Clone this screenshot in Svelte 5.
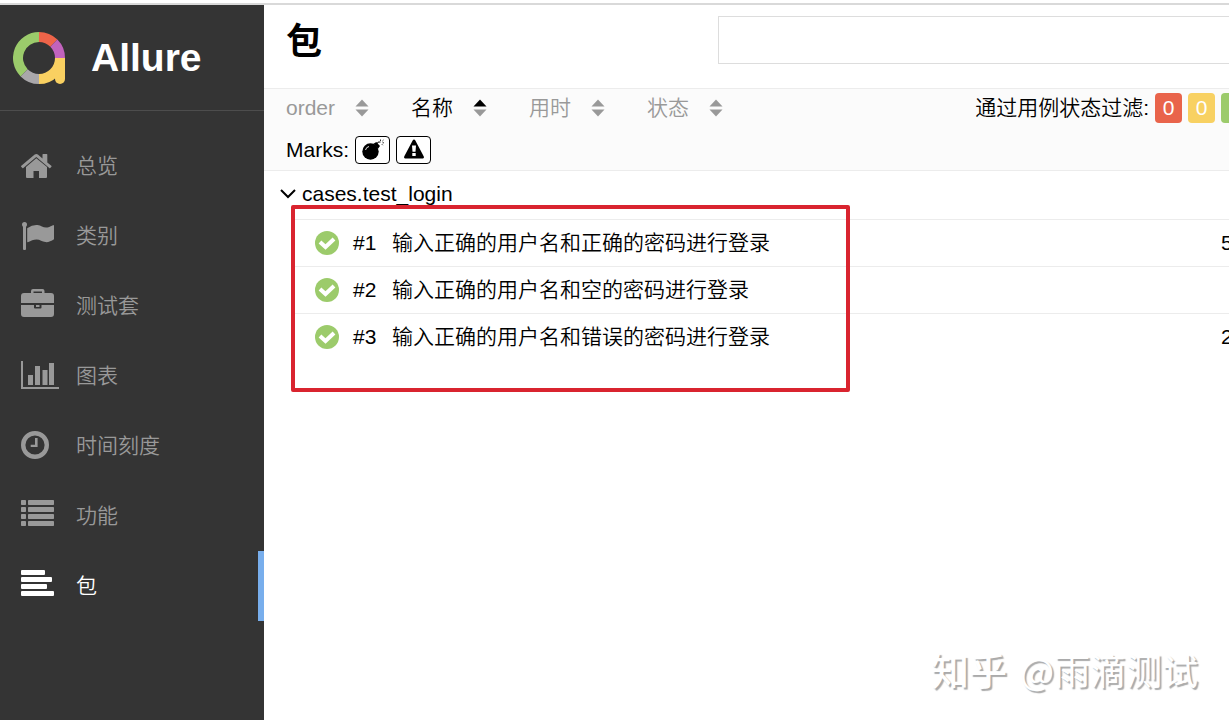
<script lang="ts">
	const navItems = [
		{ id: "overview", label: "总览" },
		{ id: "categories", label: "类别" },
		{ id: "suites", label: "测试套" },
		{ id: "graph", label: "图表" },
		{ id: "timeline", label: "时间刻度" },
		{ id: "behaviors", label: "功能" },
		{ id: "packages", label: "包" }
	];

	const sorters = ["order", "名称", "用时", "状态"];

	const statuses = [
		{ name: "failed", count: 0 },
		{ name: "broken", count: 0 },
		{ name: "passed", count: 3 }
	];

	const cases = [
		{ order: 1, name: "输入正确的用户名和正确的密码进行登录", duration: "5s" },
		{ order: 2, name: "输入正确的用户名和空的密码进行登录", duration: "" },
		{ order: 3, name: "输入正确的用户名和错误的密码进行登录", duration: "2s" }
	];

	let active = $state("packages");
	let sortBy = $state("名称");
	let expanded = $state(true);
	let query = $state("");
</script>

<div class="app">
	<aside class="side-nav">
		<a class="brand" href="#overview">
			<svg class="logo" viewBox="0 0 52 52" fill="none" stroke-width="10">
				<path d="M26 5A21 21 0 0 1 40.85 11.15" stroke="#ee6449" />
				<path d="M40.85 11.15A21 21 0 0 1 47 26" stroke="#c163bd" />
				<path d="M11.15 40.85A21 21 0 0 1 26 5" stroke="#9bcb6b" />
				<path d="M26 47A21 21 0 0 1 11.15 40.85" stroke="#a9a7aa" />
				<path d="M47 26A21 21 0 0 1 26 47" stroke="#f9d061" />
				<path d="M42 26H52V47A5 5 0 0 1 42 47Z" fill="#f9d061" stroke="none" />
			</svg>
			<span>Allure</span>
		</a>

		<nav>
			{#each navItems as item}
				<a href="#{item.id}" class="nav-item" class:active={active === item.id} onclick={() => (active = item.id)}>
					<svg class="nav-icon" viewBox="0 0 38 38" fill="currentColor">
						{#if item.id === "overview"}
							<path d="M15.3 11.2 26 20V30q0 1-1 1H18V24H12.500V31H6q-1 0-1-1V20Z" />
							<path d="M.3 18.800 13.700 7.500q1.600-1.200 3.200 0L21.500 11.400V7.600q0-.6.6-.6h3.600q.6 0 .6.600V15.400l4 3.400q.5.400.1.900l-1.200 1.300q-.4.400-.9 0L15.300 9.900 2.300 21q-.5.400-.9 0L.2 19.700q-.4-.5.1-.9Z" />
						{:else if item.id === "categories"}
							<circle cx="3.500" cy="7.500" r="2.500" />
							<path d="M2 8H5V32q0 1-1 1H3q-1 0-1-1Z" />
							<path d="M6.200 11.300q5.300-3.800 10.300-3.300c4 .4 6 3.200 10 2.400 2.500-.5 4.200-1.700 5.400-2.200q1.100-.4 1.100.8V22.300c-3 1.800-5.500 3.100-8.600 2.800-3.300-.4-5.300-2.700-8.800-2.700-3.200 0-5.900 1.300-8.300 2.700q-1.100.6-1.100-.6Z" />
						{:else if item.id === "suites"}
							<path d="M10 6V4q0-2 2-2H21.500q2 0 2 2V6H30q3 0 3 3V16H0V9Q0 6 3 6ZM12.500 6H21V4.500H12.500Z" fill-rule="evenodd" />
							<path d="M0 18H13V20.500q0 1 1 1H19.500q1 0 1-1V18H33V27q0 3-3 3H3q-3 0-3-3Z" />
							<path d="M15 18H18.500V20H15Z" />
						{:else if item.id === "graph"}
							<path d="M0 4H2V30H38V32H0Z" />
							<path d="M7 18h5v10H7ZM14 9h5v19H14ZM21.500 13h5v15H21.500ZM28 6h5v22H28Z" />
						{:else if item.id === "timeline"}
							<circle cx="14" cy="18" r="11.800" fill="none" stroke="currentColor" stroke-width="4.400" />
							<path d="M14 11H16.600V20H9.700V17.700H14Z" />
						{:else if item.id === "behaviors"}
							{#each [3, 10, 17, 24] as y}
								<rect x="0" {y} width="5" height="5" rx=".7" />
								<rect x="7" {y} width="26" height="5" rx=".7" />
							{/each}
						{:else}
							<rect x="0" y="3" width="24" height="5" rx="1" />
							<rect x="0" y="10" width="31" height="5" rx="1" />
							<rect x="0" y="17" width="26" height="5" rx="1" />
							<rect x="0" y="24" width="33" height="5" rx="1" />
						{/if}
					</svg>
					<span>{item.label}</span>
				</a>
			{/each}
		</nav>
	</aside>

	<main>
		<div class="report">
			<header class="title-bar">
				<h1>包</h1>
				<input class="search" type="search" aria-label="Search" bind:value={query} />
			</header>

			<section class="controls">
				<div class="control-row">
					{#each sorters as sorter}
						<button class="sorter" class:selected={sortBy === sorter} onclick={() => (sortBy = sorter)}>
							<span>{sorter}</span>
							<svg class="sort-icon" viewBox="0 0 14 18">
								<path class="asc" d="M7 .5 13.500 7.500H.5Z" />
								<path d="M.5 10.500H13.500L7 17.500Z" />
							</svg>
						</button>
					{/each}

					<div class="status-filter">
						<span>通过用例状态过滤:</span>
						{#each statuses as status}
							<button class="status {status.name}">{status.count}</button>
						{/each}
					</div>
				</div>

				<div class="marks">
					<span>Marks:</span>
					<button class="mark" aria-label="Flaky">
						<svg viewBox="0 0 22 22">
							<circle cx="8.500" cy="12.500" r="8.200" />
							<path d="M11.500 4.800 14.300 3 18 7 16 9.700Z" />
							<path d="M14.500 5.500Q15.500 2 18.500 3" fill="none" stroke="#000" />
							<path d="M18.500.5v1.500M21.500 1l-1.200 1.200M20.500 3.800H22M19.800 5.200l1 1" stroke="#000" stroke-width=".8" />
							<path d="M3.500 11Q4.200 8 7 7.500" fill="none" stroke="#fff" stroke-width=".9" />
						</svg>
					</button>
					<button class="mark" aria-label="Known issue">
						<svg viewBox="0 0 22 22">
							<path d="M11 .5Q11.800.5 12.200 1.300L20.800 17.500Q21.500 19.500 19.800 19.500H2.200Q.5 19.500 1.200 17.500L9.800 1.300Q10.200.5 11 .5Z" />
							<path d="M9 6.500H13L12.500 12.700H9.500ZM9.300 14H12.700V17H9.300Z" fill="#fff" />
						</svg>
					</button>
				</div>
			</section>

			<section class="tree">
				<button class="group" aria-expanded={expanded} onclick={() => (expanded = !expanded)}>
					<svg class="chevron" viewBox="0 0 16 16">
						<path d="M1 4 8 11 15 4" fill="none" stroke="currentColor" stroke-width="2" />
					</svg>
					<span>cases.test_login</span>
				</button>

				{#if expanded}
					<ul class="cases">
						{#each cases as item}
							<li>
								<a href="#case-{item.order}">
									<svg class="passed-icon" viewBox="0 0 24 24">
										<circle cx="12" cy="12" r="12" fill="#9ccb6b" />
										<path d="M5 11 10.500 16 19 8" fill="none" stroke="#fff" stroke-width="4" />
									</svg>
									<span class="order">#{item.order}</span>
									<span class="name">{item.name}</span>
									<span class="duration">{item.duration}</span>
								</a>
							</li>
						{/each}
					</ul>
					<div class="highlight"></div>
				{/if}
			</section>
		</div>
		<div class="watermark">
			<span class="site">知乎</span>
			<span>@雨滴测试</span>
		</div>
	</main>
</div>

<style>
	:global(body) {
		background: #fff;
		overflow-x: hidden;
	}

	.app {
		display: flex;
		box-sizing: border-box;
		min-height: 100vh;
		margin-top: 3px;
		border-top: 2px solid #d9d9d9;
		font: 350 21px/30px "Liberation Sans", "Noto Sans CJK SC", sans-serif;
		color: #000;
		margin-bottom: -3px;
	}

	a {
		color: inherit;
		text-decoration: none;
	}

	button {
		padding: 0;
		border: 0;
		background: none;
		font: inherit;
		color: inherit;
		cursor: pointer;
	}

	.side-nav {
		flex: 0 0 264px;
		background: #343434;
		color: #999;
	}

	.brand {
		display: flex;
		align-items: center;
		gap: 26px;
		height: 105px;
		padding-left: 13px;
		border-bottom: 1px solid #4d4d4d;
		font-size: 39px;
		font-weight: 700;
		color: #fff;
	}

	.logo {
		width: 52px;
		height: 52px;
	}

	nav {
		padding-top: 20px;
	}

	.nav-item {
		display: flex;
		align-items: center;
		gap: 17px;
		box-sizing: border-box;
		height: 70px;
		padding-left: 21px;
		border-right: 6px solid transparent;
	}

	.nav-item.active {
		border-color: #78aeec;
		color: #fff;
	}

	.nav-icon {
		width: 38px;
		height: 38px;
	}

	main {
		position: relative;
		flex: 1;
		min-width: 0;
		overflow: hidden;
	}

	/* the report is a little wider than its pane and is cut at the edge */
	.report {
		margin-right: -19px;
	}

	.title-bar {
		display: grid;
		grid-template-columns: 6fr 7fr;
		align-items: center;
		height: 83px;
		box-sizing: border-box;
		padding-bottom: 14px;
	}

	h1 {
		margin: 0;
		padding: 5px 0 0 22px;
		font-size: 36px;
		line-height: 48px;
		font-weight: 700;
	}

	.search {
		box-sizing: border-box;
		width: 100%;
		height: 48px;
		padding: 0 12px;
		border: 1px solid #ddd;
		border-radius: 0;
		background: #fff;
		font: inherit;
	}

	.controls {
		padding: 4px 0 5px 22px;
		border-top: 1px solid #ececec;
		border-bottom: 1px solid #ececec;
		background: #fbfbfb;
	}

	.control-row {
		display: flex;
		align-items: center;
		gap: 42px;
	}

	.sorter {
		display: flex;
		align-items: center;
		gap: 20px;
		color: #999;
	}

	.sorter.selected {
		color: #000;
	}

	.sort-icon {
		width: 14px;
		height: 18px;
		fill: #999;
	}

	.selected .asc {
		fill: #000;
	}

	.status-filter {
		display: flex;
		align-items: center;
		gap: 6px;
		margin-left: auto;
		white-space: nowrap;
	}

	.status {
		width: 27px;
		height: 30px;
		border-radius: 4px;
		color: #fff;
	}

	.failed {
		background: #e9644b;
	}

	.broken {
		background: #f8d162;
	}

	.passed {
		background: #9ccb6b;
	}

	.marks {
		display: flex;
		align-items: center;
		gap: 6px;
		margin-top: 12px;
	}

	.mark {
		display: flex;
		align-items: center;
		justify-content: center;
		box-sizing: border-box;
		width: 35px;
		height: 28px;
		border: 1px solid #000;
		border-radius: 4px;
		background: #fff;
	}

	.mark svg {
		width: 22px;
		height: 22px;
	}

	.tree {
		position: relative;
	}

	.group {
		display: flex;
		align-items: center;
		gap: 6px;
		box-sizing: border-box;
		width: 100%;
		height: 48px;
		padding: 0 0 2px 16px;
		text-align: left;
	}

	.chevron {
		width: 16px;
		height: 16px;
	}

	.cases {
		margin: 0 0 0 30px;
		padding: 0;
		list-style: none;
	}

	.cases a {
		display: flex;
		align-items: center;
		height: 46px;
		padding-left: 21px;
		border-top: 1px solid #ececec;
	}

	.passed-icon {
		width: 24px;
		height: 24px;
		margin-right: 14px;
	}

	.order {
		width: 39px;
	}

	.name {
		flex: 1;
	}

	.duration {
		width: 27px;
	}

	.highlight {
		position: absolute;
		top: 34px;
		left: 27px;
		box-sizing: border-box;
		width: 559px;
		height: 187px;
		border: 4px solid #d9242f;
		border-radius: 2px;
		pointer-events: none;
	}

	.watermark {
		position: absolute;
		right: 31px;
		bottom: 30px;
		display: flex;
		align-items: center;
		gap: 13px;
		font-family: "Noto Sans CJK SC", sans-serif;
		font-size: 36px;
		line-height: 48px;
		font-weight: 400;
		color: #fff;
		text-shadow: 2px 2px 1px #aaa;
	}

	.site {
		font-size: 38px;
		font-weight: 500;
	}
</style>
